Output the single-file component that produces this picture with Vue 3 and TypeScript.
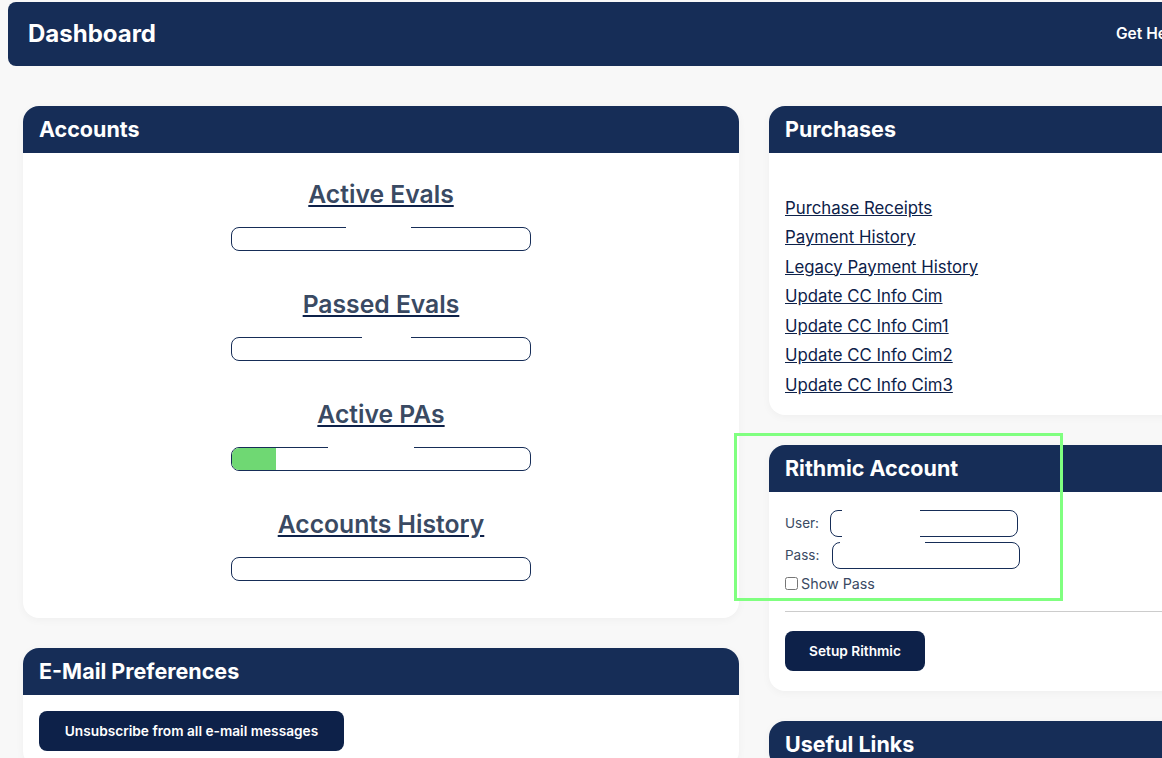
<template>
  <div class="page">
    <header class="topbar">
      <h1>Dashboard</h1>
      <a class="help">Get Help</a>
    </header>

    <div class="columns">
      <div class="col">
        <section class="card">
          <h2 class="card-head">Accounts</h2>
          <div class="accounts">
            <div v-for="acc in accounts" :key="acc.title" class="account">
              <a class="account-title">{{ acc.title }}</a>
              <div class="bar">
                <div class="bar-fill" :style="{ width: acc.fill + 'px' }"></div>
                <span class="mask" :style="{ left: acc.maskLeft + 'px', width: acc.maskWidth + 'px' }"></span>
              </div>
            </div>
          </div>
        </section>

        <section class="card">
          <h2 class="card-head">E-Mail Preferences</h2>
          <div class="card-body">
            <button class="btn btn-wide">Unsubscribe from all e-mail messages</button>
          </div>
        </section>
      </div>

      <div class="col">
        <section class="card">
          <h2 class="card-head">Purchases</h2>
          <ul class="links">
            <li v-for="link in purchaseLinks" :key="link"><a>{{ link }}</a></li>
          </ul>
        </section>

        <section class="card">
          <h2 class="card-head">Rithmic Account</h2>
          <div class="card-body rithmic">
            <div class="field">
              <label class="user-label">User:</label>
              <div class="input-wrap">
                <input type="text" />
                <span class="mask mask-user"></span>
              </div>
            </div>
            <div class="field">
              <label class="pass-label">Pass:</label>
              <div class="input-wrap">
                <input type="text" />
                <span class="mask mask-pass"></span>
              </div>
            </div>
            <label class="show-pass"><input type="checkbox" /> Show Pass</label>
            <hr />
            <button class="btn btn-setup">Setup Rithmic</button>
          </div>
        </section>

        <section class="card">
          <h2 class="card-head">Useful Links</h2>
        </section>
      </div>
    </div>

    <div class="highlight"></div>
  </div>
</template>

<script setup lang="ts">
interface Account {
  title: string
  fill: number
  maskLeft: number
  maskWidth: number
}

const accounts: Account[] = [
  { title: 'Active Evals', fill: 0, maskLeft: 114, maskWidth: 65 },
  { title: 'Passed Evals', fill: 0, maskLeft: 130, maskWidth: 49 },
  { title: 'Active PAs', fill: 44, maskLeft: 96, maskWidth: 86 },
  { title: 'Accounts History', fill: 0, maskLeft: 0, maskWidth: 0 }
]

const purchaseLinks = [
  'Purchase Receipts',
  'Payment History',
  'Legacy Payment History',
  'Update CC Info Cim',
  'Update CC Info Cim1',
  'Update CC Info Cim2',
  'Update CC Info Cim3'
]
</script>

<style>
html,
body {
  margin: 0;
  overflow: hidden;
  background: #f8f8f8;
}
</style>

<style scoped>
.page {
  position: relative;
  width: 1162px;
  height: 758px;
  overflow: hidden;
  padding-top: 2px;
  box-sizing: border-box;
  font-family: Inter, "Noto Sans", sans-serif;
  color: #3a4a63;
}

.topbar {
  display: flex;
  align-items: center;
  justify-content: space-between;
  width: 1500px;
  height: 64px;
  margin-left: 8px;
  padding: 0 20px 2px;
  box-sizing: border-box;
  background: #162d57;
  border-radius: 8px;
  color: #fff;
}

.topbar h1 {
  margin: 0;
  font-size: 24px;
  font-weight: 700;
}

.help {
  width: 372px;
  font-size: 15.5px;
  font-weight: 600;
}

.columns {
  display: flex;
  gap: 30px;
  width: 1462px;
  margin: 40px 0 0 23px;
}

.col {
  display: flex;
  flex-direction: column;
  gap: 30px;
  width: 716px;
  flex: none;
}

.card {
  background: #fff;
  border-radius: 16px;
  box-shadow: 0 2px 8px rgba(0, 0, 0, 0.04);
  overflow: hidden;
}

.card-head {
  margin: 0;
  height: 47px;
  line-height: 47px;
  padding: 0 16px;
  background: #162d57;
  color: #fff;
  font-size: 21.5px;
  font-weight: 700;
}

.card-body {
  padding: 16px;
}

.accounts {
  display: flex;
  flex-direction: column;
  align-items: center;
  padding: 24px 0 23px;
}

.account {
  display: flex;
  flex-direction: column;
  align-items: center;
  height: 110px;
}

.account:last-child {
  height: 88px;
}

.account-title {
  height: 34px;
  line-height: 34px;
  font-size: 24.7px;
  font-weight: 600;
  text-decoration: underline;
  text-decoration-color: #0d2149;
}

.bar {
  position: relative;
  width: 300px;
  height: 24px;
  margin-top: 16px;
  border: 1px solid #162d57;
  border-radius: 8px;
  box-sizing: border-box;
}

.bar-fill {
  height: 100%;
  background: #6fd873;
  border-radius: 7px 0 0 7px;
}

.mask {
  position: absolute;
  top: -2px;
  height: 4px;
  background: #fff;
}

.links {
  margin: 0;
  padding: 40.5px 16px 15px;
  list-style: none;
  font-size: 16.8px;
  line-height: 29.5px;
}

.links a {
  color: #0d2149;
  text-decoration: underline;
}

.rithmic {
  padding-top: 18px;
  padding-bottom: 20px;
  font-size: 13.5px;
}

.field {
  display: flex;
  align-items: center;
  height: 27px;
  margin-bottom: 5px;
}

.field label {
  position: relative;
  top: -1px;
}

.user-label {
  width: 45px;
}

.pass-label {
  width: 47px;
}

.input-wrap {
  position: relative;
  display: flex;
}

.input-wrap input {
  width: 188px;
  height: 27px;
  padding: 0 8px;
  box-sizing: border-box;
  background: #fff;
  border: 1px solid #162d57;
  border-radius: 8px;
  outline: none;
}

.mask-user {
  left: 12px;
  top: -2px;
  width: 78px;
  height: 31px;
}

.mask-pass {
  left: 8px;
  width: 85px;
}

.show-pass {
  display: flex;
  align-items: center;
  gap: 3px;
  height: 18px;
  margin-top: 3px;
  font-size: 14.3px;
}

.show-pass input {
  width: 13px;
  height: 13px;
  margin: 0;
}

hr {
  margin: 19px 0 19px;
  border: none;
  border-top: 1px solid #ccc;
}

.btn {
  display: block;
  height: 40px;
  padding: 0;
  background: #0d2149;
  color: #fff;
  border: none;
  border-radius: 8px;
  font-family: inherit;
  font-size: 13.7px;
  font-weight: 600;
}

.btn-wide {
  width: 305px;
}

.btn-setup {
  width: 140px;
}

.highlight {
  position: absolute;
  left: 734px;
  top: 433px;
  width: 329px;
  height: 168px;
  box-sizing: border-box;
  border: 3px solid #80ff80;
}
</style>
